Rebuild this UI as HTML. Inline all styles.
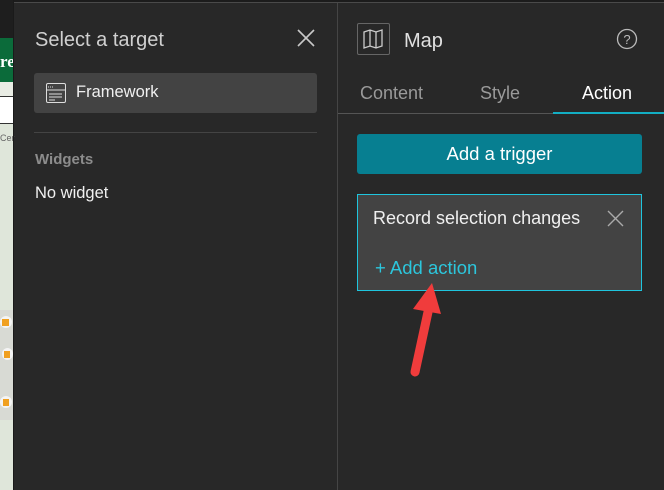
<!DOCTYPE html>
<html><head><meta charset="utf-8"><style>
*{margin:0;padding:0;box-sizing:border-box}
body{width:664px;height:490px;overflow:hidden;background:#282828;font-family:"Liberation Sans",sans-serif;position:relative}
.abs{position:absolute;white-space:nowrap}
</style></head><body>
<!-- map strip -->
<div class="abs" style="left:0;top:0;width:13px;height:490px;background:#dfe6da"></div>
<div class="abs" style="left:0;top:0;width:13px;height:38px;background:#1e1e1e"></div>
<div class="abs" style="left:0;top:38px;width:13px;height:44px;background:#0b6b3a"></div>
<div class="abs" style="left:0;top:52px;font:bold 17px 'Liberation Serif',serif;color:#fff;width:13px;overflow:hidden;white-space:nowrap">re</div>
<div class="abs" style="left:0;top:82px;width:13px;height:14px;background:#e9ece4"></div>
<div class="abs" style="left:0;top:96px;width:13px;height:28px;background:#fff;border-top:1px solid #333;border-bottom:1px solid #333"></div>
<div class="abs" style="left:0;top:133px;font-size:9px;color:#666">Cer</div>
<div class="abs" style="left:0;top:310px;width:13px;height:110px;background:#d8dad4"></div>
<div class="abs" style="left:0;top:316px;width:12px;height:12px;border-radius:50%;background:#f4f4f4"></div>
<div class="abs" style="left:2px;top:319px;width:7px;height:7px;background:#f0a020"></div>
<div class="abs" style="left:2px;top:348px;width:11px;height:12px;border-radius:50%;background:#f4f4f4"></div>
<div class="abs" style="left:4px;top:351px;width:6px;height:7px;background:#f0a020"></div>
<div class="abs" style="left:0;top:396px;width:12px;height:12px;border-radius:50%;background:#f4f4f4"></div>
<div class="abs" style="left:3px;top:399px;width:6px;height:7px;background:#f0a020"></div>
<div class="abs" style="left:13px;top:0;width:1px;height:490px;background:#1a1a1a"></div>
<!-- top border -->
<div class="abs" style="left:14px;top:0;width:650px;height:3px;background:#1c1c1c;border-bottom:1px solid #4a4a4a"></div>
<!-- left panel -->
<div class="abs" style="left:35px;top:29px;font-size:20px;color:#d0d0d0">Select a target</div>
<svg class="abs" style="left:297px;top:29px" width="18" height="18"><path d="M1 1L17 17M17 1L1 17" stroke="#c8c8c8" stroke-width="1.6"/></svg>
<div class="abs" style="left:34px;top:73px;width:283px;height:40px;background:#434343;border-radius:3px"></div>
<svg class="abs" style="left:46px;top:83px" width="21" height="21"><rect x="0.5" y="0.5" width="19" height="19" rx="1.5" fill="none" stroke="#ddd"/><path d="M2 4h1M4 4h1M6 4h1M0.5 7h19M3 11h13M3 14h13M3 17h6" stroke="#ddd"/></svg>
<div class="abs" style="left:76px;top:83px;font-size:16.5px;color:#f0f0f0">Framework</div>
<div class="abs" style="left:34px;top:132px;width:283px;height:1px;background:#444"></div>
<div class="abs" style="left:35px;top:151px;font-size:15px;font-weight:bold;color:#8c8c8c">Widgets</div>
<div class="abs" style="left:35px;top:184px;font-size:16.5px;color:#f0f0f0">No widget</div>
<!-- divider -->
<div class="abs" style="left:337px;top:3px;width:1px;height:487px;background:#454545"></div>
<!-- right panel -->
<div class="abs" style="left:357px;top:23px;width:33px;height:32px;border:1px solid #666;border-radius:2px"></div>
<svg class="abs" style="left:363px;top:29px" width="21" height="20"><path d="M1 3L7 1L13 3L19 1V17L13 19L7 17L1 19Z M7 1V17 M13 3V19" fill="none" stroke="#ccc" stroke-width="1.3"/></svg>
<div class="abs" style="left:404px;top:30px;font-size:20px;color:#e0e0e0">Map</div>
<svg class="abs" style="left:616px;top:28px" width="22" height="22"><circle cx="11" cy="11" r="9.5" fill="none" stroke="#bbb" stroke-width="1.3"/><text x="11" y="16" text-anchor="middle" font-family="Liberation Sans" font-size="13" fill="#bbb">?</text></svg>
<div class="abs" style="left:360px;top:83px;font-size:18px;color:#9a9a9a">Content</div>
<div class="abs" style="left:480px;top:83px;font-size:18px;color:#9a9a9a">Style</div>
<div class="abs" style="left:582px;top:83px;font-size:18px;color:#fff">Action</div>
<div class="abs" style="left:338px;top:113px;width:326px;height:1px;background:#555"></div>
<div class="abs" style="left:553px;top:112px;width:111px;height:2px;background:#13aec3"></div>
<div class="abs" style="left:357px;top:134px;width:285px;height:40px;background:#077f91;border-radius:3px;color:#fff;font-size:18.5px;text-align:center;line-height:40px">Add a trigger</div>
<div class="abs" style="left:357px;top:194px;width:285px;height:97px;background:#434343;border:1px solid #1fc5de"></div>
<div class="abs" style="left:373px;top:208px;font-size:18px;color:#f0f0f0">Record selection changes</div>
<svg class="abs" style="left:607px;top:210px" width="17" height="17"><path d="M1 1L16 16M16 1L1 16" stroke="#aaa" stroke-width="1.4"/></svg>
<div class="abs" style="left:375px;top:257px;font-size:18.5px;color:#2cc6dc">+ Add action</div>
<!-- arrow -->
<svg class="abs" style="left:0;top:0" width="664" height="490"><path d="M428 312L415 372" stroke="#f03c3c" stroke-width="9" stroke-linecap="round"/><path d="M432 283L413 309L441 314Z" fill="#f03c3c"/></svg>
</body></html>
